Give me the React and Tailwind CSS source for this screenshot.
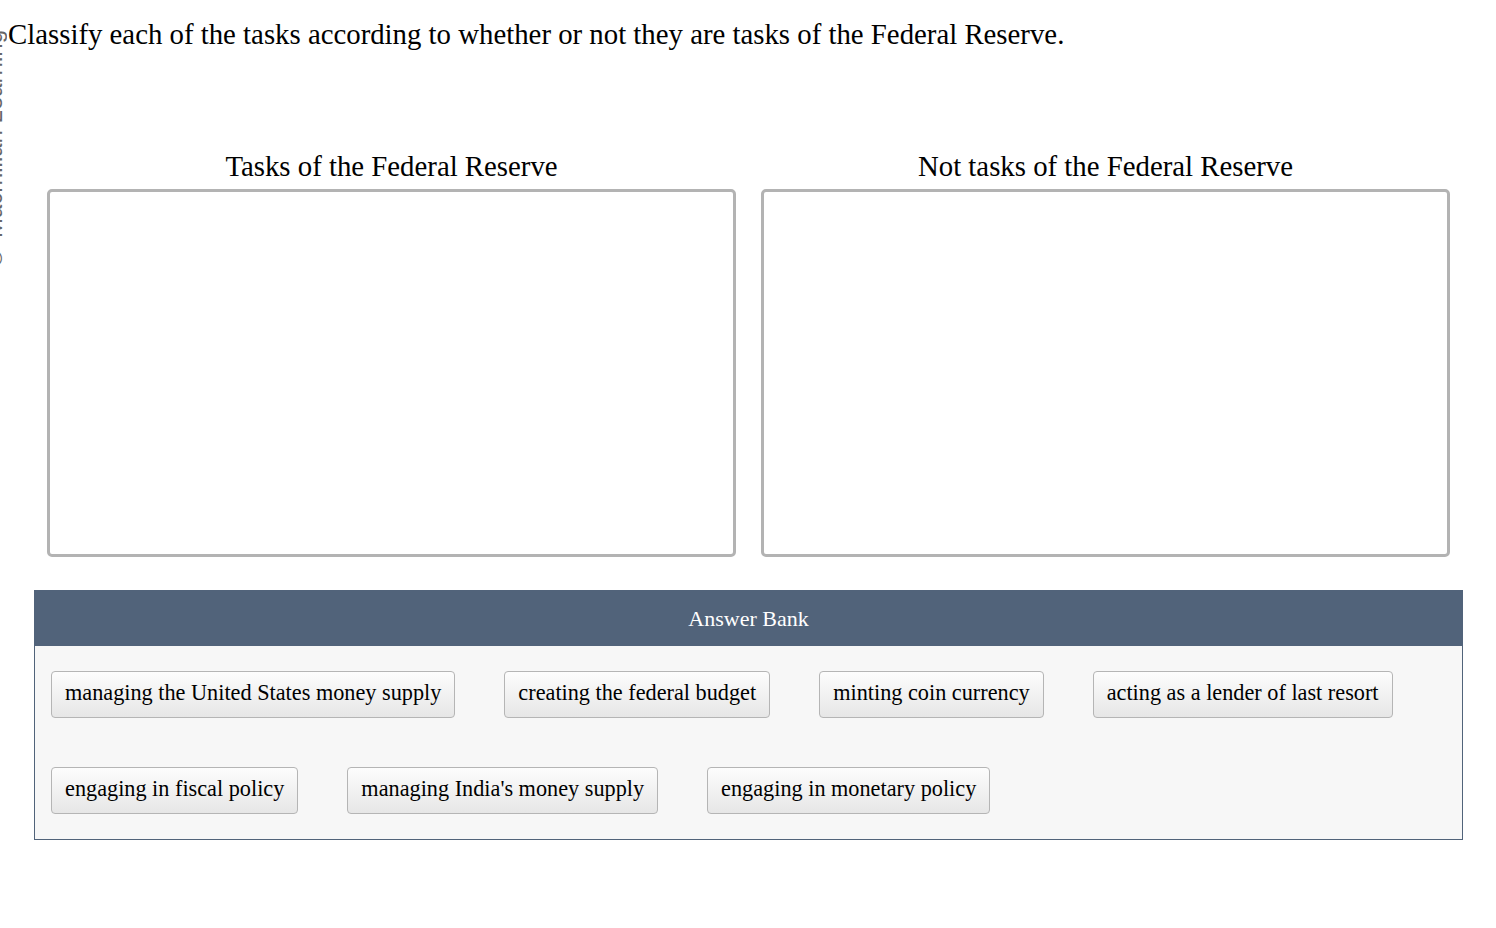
const choices = [
  'managing the United States money supply',
  'creating the federal budget',
  'minting coin currency',
  'acting as a lender of last resort',
  'engaging in fiscal policy',
  "managing India's money supply",
  'engaging in monetary policy',
];

const columns = ['Tasks of the Federal Reserve', 'Not tasks of the Federal Reserve'];

export default function App() {
  return (
    <div className="relative min-h-screen overflow-hidden bg-white font-['Liberation_Serif','Times_New_Roman',serif] text-black">
      {/* copyright strip, mostly off the left edge */}
      <span className="absolute left-[-20px] top-[30px] rotate-180 whitespace-nowrap font-['Liberation_Sans',Arial,sans-serif] text-[24px] leading-[27px] text-[#666] [writing-mode:vertical-rl]">
        © Macmillan Learning
      </span>

      <p className="pl-2 pt-[18px] text-[28.8px] leading-[33px]">
        Classify each of the tasks according to whether or not they are tasks of the Federal Reserve.
      </p>

      <div className="mt-[99px] grid grid-cols-2 gap-x-[25px] pl-[47px] pr-[46px]">
        {columns.map((title) => (
          <div key={title} className="flex flex-col">
            <h2 className="mb-[6px] text-center text-[28.8px] font-normal leading-[33px]">{title}</h2>
            <div className="h-[368px] rounded-[5px] border-[3px] border-[#b3b3b3] bg-white"></div>
          </div>
        ))}
      </div>

      <div className="ml-[34px] mr-[33px] mt-[33px]">
        <div className="flex h-[56px] items-center justify-center bg-[#51637a] text-[22px] text-white">
          Answer Bank
        </div>
        <div className="flex flex-wrap gap-x-[49px] gap-y-[49px] border border-t-0 border-[#51637a] bg-[#f7f7f7] pb-[25px] pl-4 pr-4 pt-[25px]">
          {choices.map((c) => (
            <div
              key={c}
              className="h-[47px] rounded-[4px] border border-[#b5b5b5] bg-gradient-to-b from-[#fdfdfd] to-[#e6e6e6] px-[13px] pt-[8px] text-[22.25px] leading-[25px]"
            >
              {c}
            </div>
          ))}
        </div>
      </div>
    </div>
  );
}
